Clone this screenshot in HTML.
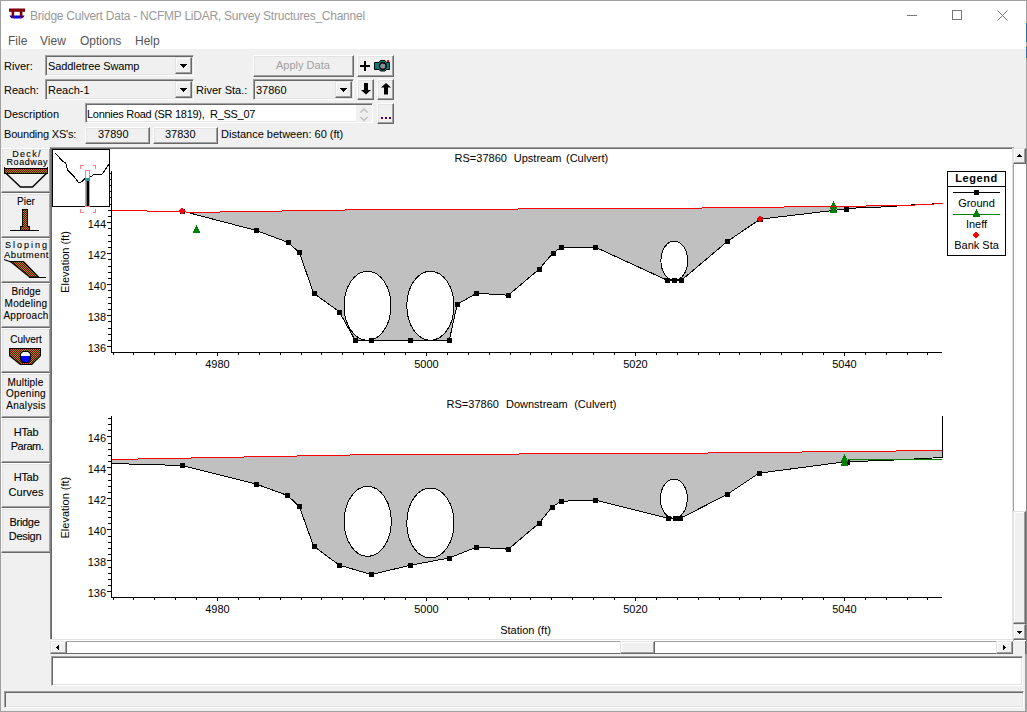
<!DOCTYPE html>
<html><head><meta charset="utf-8">
<style>
*{margin:0;padding:0;box-sizing:border-box}
html,body{width:1027px;height:712px;overflow:hidden;background:#f0f0f0;font-family:"Liberation Sans",sans-serif;font-size:11px;color:#000}
.a{position:absolute}
.t{position:absolute;white-space:pre;line-height:1}
.btn{position:absolute;background:#f0f0f0;border-top:1px solid #fff;border-left:1px solid #fff;border-right:1px solid #696969;border-bottom:1px solid #696969;box-shadow:inset -1px -1px 0 #a0a0a0, inset 1px 1px 0 #e3e3e3}
.sunk{position:absolute;border-top:1px solid #a0a0a0;border-left:1px solid #a0a0a0;border-right:1px solid #fff;border-bottom:1px solid #fff;box-shadow:inset 1px 1px 0 #696969, inset -1px -1px 0 #e3e3e3}
.sb{position:absolute;background:#f0f0f0;border-top:1px solid #e3e3e3;border-left:1px solid #e3e3e3;border-right:1px solid #696969;border-bottom:1px solid #696969;box-shadow:inset -1px -1px 0 #a0a0a0, inset 1px 1px 0 #fff}
.side{position:absolute;left:1px;width:50px;height:45px;background:#f0f0f0;border-top:1px solid #fff;border-left:1px solid #fff;border-right:1px solid #696969;border-bottom:1px solid #696969;box-shadow:inset -1px -1px 0 #a0a0a0, inset 1px 1px 0 #e3e3e3}
.st{position:absolute;left:0;width:50px;text-align:center;white-space:pre;line-height:1;font-size:10px}
</style></head><body>
<div class="a" style="left:0;top:0;width:1027px;height:712px;border:1px solid #a0a0a0"></div>
<!-- title bar -->
<div class="a" style="left:1px;top:1px;width:1025px;height:48px;background:#fff"></div>
<svg class="a" style="left:9px;top:8px" width="17" height="12" viewBox="0 0 17 12"><path d="M0.5 7.5H15.5Q14.5 10.5 12 10.5H4Q1.5 10.5 0.5 7.5Z" fill="#0000ff"/><rect x="0" y="0.5" width="16" height="3.3" fill="#800000"/><rect x="2.6" y="3" width="2.6" height="7" fill="#800000"/><rect x="10.8" y="3" width="2.6" height="7" fill="#800000"/></svg>
<div class="t" style="left:30px;top:10px;font-size:12px;letter-spacing:-0.24px;color:#999">Bridge Culvert Data - NCFMP LiDAR, Survey Structures_Channel</div>
<div class="a" style="left:907px;top:15px;width:10px;height:1px;background:#777"></div>
<div class="a" style="left:952px;top:10px;width:10px;height:10px;border:1px solid #777"></div>
<svg class="a" style="left:997px;top:10px" width="11" height="11"><path d="M0.5 0.5 L10.5 10.5 M10.5 0.5 L0.5 10.5" stroke="#777" stroke-width="1"/></svg>
<!-- menu -->
<div class="t" style="left:8px;top:35px;font-size:12px;color:#555">File</div>
<div class="t" style="left:40px;top:35px;font-size:12px;color:#555">View</div>
<div class="t" style="left:80px;top:35px;font-size:12px;color:#555">Options</div>
<div class="t" style="left:135px;top:35px;font-size:12px;color:#555">Help</div>

<!-- form rows -->
<div class="t" style="left:4px;top:61px">River:</div>
<div class="sunk" style="left:45px;top:55px;width:149px;height:21px;background:#f0f0f0"></div>
<div class="sb" style="left:175px;top:57px;width:17px;height:17px"></div>
<svg class="a" style="left:180px;top:64px" width="7" height="4"><rect x="0" y="0" width="7" height="1"/><rect x="1" y="1" width="5" height="1"/><rect x="2" y="2" width="3" height="1"/><rect x="3" y="3" width="1" height="1"/></svg>
<div class="t" style="left:48px;top:61px;letter-spacing:-0.1px">Saddletree Swamp</div>
<div class="t" style="left:4px;top:85px">Reach:</div>
<div class="sunk" style="left:45px;top:79px;width:149px;height:21px;background:#f0f0f0"></div>
<div class="sb" style="left:175px;top:81px;width:17px;height:17px"></div>
<svg class="a" style="left:180px;top:88px" width="7" height="4"><rect x="0" y="0" width="7" height="1"/><rect x="1" y="1" width="5" height="1"/><rect x="2" y="2" width="3" height="1"/><rect x="3" y="3" width="1" height="1"/></svg>
<div class="t" style="left:48px;top:85px">Reach-1</div>
<div class="t" style="left:196px;top:85px">River Sta.:</div>
<div class="sunk" style="left:253px;top:79px;width:101px;height:21px;background:#f0f0f0"></div>
<div class="sb" style="left:335px;top:81px;width:17px;height:17px"></div>
<svg class="a" style="left:340px;top:88px" width="7" height="4"><rect x="0" y="0" width="7" height="1"/><rect x="1" y="1" width="5" height="1"/><rect x="2" y="2" width="3" height="1"/><rect x="3" y="3" width="1" height="1"/></svg>
<div class="t" style="left:256px;top:85px">37860</div>
<div class="btn" style="left:253px;top:55px;width:101px;height:22px"></div>
<div class="t" style="left:276px;top:60px;color:#a0a0a0">Apply Data</div>
<div class="btn" style="left:357px;top:55px;width:37px;height:22px"></div>
<svg class="a" style="left:357px;top:55px" width="37" height="22"><path d="M3 11H13M8 6V16" stroke="#000" stroke-width="2"/><path d="M17.5 7.5H22L23.5 5.5H28L29.5 7.5H32.5V14.5H29.5L28 16H23.5L22 14.5H17.5Z" fill="#008080" stroke="#000" stroke-width="1"/><rect x="30" y="5" width="2" height="2" fill="#ff0000"/><circle cx="25.8" cy="11" r="4" fill="#000"/><circle cx="25.8" cy="11" r="2.6" fill="#909090"/></svg>
<div class="btn" style="left:357px;top:79px;width:17px;height:21px"></div>
<svg class="a" style="left:359px;top:82px" width="13" height="15"><path d="M3.5 1H7.5V8H10.5L5.5 12.5L0.5 8H3.5Z" fill="#000" transform="translate(1.5,0)"/></svg>
<div class="btn" style="left:377px;top:79px;width:17px;height:21px"></div>
<svg class="a" style="left:379px;top:82px" width="13" height="15"><path d="M3.5 12.5H7.5V5.5H10.5L5.5 1L0.5 5.5H3.5Z" fill="#000" transform="translate(1.5,0)"/></svg>
<div class="t" style="left:4px;top:109px">Description</div>
<div class="sunk" style="left:85px;top:103px;width:288px;height:20px;background:#fff"></div>
<div class="a" style="left:356px;top:105px;width:16px;height:17px;background:#f0f0f0"></div><svg class="a" style="left:358px;top:106px" width="13" height="16"><path d="M2.5 6.5L6 3L9.5 6.5M2.5 11L6 14.5L9.5 11" fill="none" stroke="#c0c0c0" stroke-width="1.5"/></svg>
<div class="t" style="left:87px;top:109px;letter-spacing:-0.29px">Lonnies Road (SR 1819),  R_SS_07</div>
<div class="btn" style="left:377px;top:103px;width:17px;height:21px"></div>
<svg class="a" style="left:380px;top:117px" width="12" height="3"><rect x="1" y="0" width="2" height="2" fill="#400080"/><rect x="5" y="0" width="2" height="2" fill="#400080"/><rect x="9" y="0" width="2" height="2" fill="#400080"/></svg>
<div class="t" style="left:4px;top:129px;letter-spacing:-0.2px">Bounding XS's:</div>
<div class="btn" style="left:85px;top:127px;width:65px;height:17px"></div>
<div class="t" style="left:98px;top:129px">37890</div>
<div class="btn" style="left:153px;top:127px;width:65px;height:17px"></div>
<div class="t" style="left:165px;top:129px">37830</div>
<div class="t" style="left:221px;top:129px">Distance between: 60 (ft)</div>

<!-- sidebar -->
<div class="side" style="top:148px"></div>
<div class="side" style="top:193px"></div>
<div class="side" style="top:238px"></div>
<div class="side" style="top:283px"></div>
<div class="side" style="top:328px"></div>
<div class="side" style="top:373px"></div>
<div class="side" style="top:418px"></div>
<div class="side" style="top:463px"></div>
<div class="side" style="top:508px"></div>
<svg class="a" style="left:0;top:140px" width="52" height="420" font-family="Liberation Sans" text-anchor="middle" stroke="#000" stroke-width="0.1">
<defs><pattern id="chk" x="0" y="0" width="2" height="2" patternUnits="userSpaceOnUse"><path d="M0 0H2V2H0Z" fill="#800000" stroke="none"/><path d="M0 0H1V1H0ZM1 1H2V2H1Z" fill="#909000" stroke="none"/></pattern></defs>
<g transform="translate(0,-140)">
<text x="27" y="157" font-size="9" letter-spacing="1.3">Deck/</text>
<text x="27.3" y="165" font-size="9" letter-spacing="0.6">Roadway</text>
<g shape-rendering="crispEdges" stroke="none"><rect x="4" y="168" width="44" height="6" fill="#000"/><rect x="5" y="169" width="42" height="4" fill="url(#chk)"/></g>
<path d="M6.2 173.5L20.5 187H32.5L46.3 173.5" fill="none" stroke="#000" stroke-width="1.4"/><rect x="4" y="167" width="1" height="2" fill="#000" stroke="none"/><rect x="47" y="167" width="1" height="2" fill="#000" stroke="none"/>
<text x="26" y="205" font-size="10">Pier</text>
<g shape-rendering="crispEdges" stroke="none"><rect x="22" y="209" width="6" height="18" fill="#000"/><rect x="20" y="226" width="10" height="5" fill="#000"/><rect x="10" y="230" width="29" height="1" fill="#000"/><rect x="23" y="210" width="4" height="17" fill="url(#chk)"/><rect x="21" y="227" width="8" height="3" fill="url(#chk)"/></g>
<text x="27" y="248" font-size="9" letter-spacing="2">Sloping</text>
<text x="26.5" y="257.5" font-size="9.5" letter-spacing="0.55">Abutment</text>
<path d="M10.5 261.5H23.5L38.5 277H29.5Z" fill="url(#chk)" stroke="#000" stroke-width="1.2"/>
<path d="M4 259.5L11 262" stroke="#000" stroke-width="1.2"/>
<path d="M29 277.5H46" stroke="#000" stroke-width="1"/>
<text x="26" y="295" font-size="10">Bridge</text>
<text x="26" y="307" font-size="10" letter-spacing="0.3">Modeling</text>
<text x="26" y="319" font-size="10" letter-spacing="0.3">Approach</text>
<text x="26" y="343" font-size="10">Culvert</text>
<g stroke="none"><path d="M9 348H41V356L32 365H20L9 356Z" fill="#000"/><path d="M10 349H40V355.2L31.2 364H20.8L10 355.2Z" fill="url(#chk)"/>
<path d="M22.5 351H28.5L31 353.5V360L28.5 363H22.5L20 360V353.5Z" fill="#000"/><path d="M23 352H28L30 354V356H21V354Z" fill="#f0f0f0"/><path d="M21 356H30V359.6L28 362H23L21 359.6Z" fill="#0000ff"/></g>
<text x="25.5" y="386" font-size="10" letter-spacing="0.2">Multiple</text>
<text x="26" y="397" font-size="10" letter-spacing="0.3">Opening</text>
<text x="26" y="408.5" font-size="10" letter-spacing="0.3">Analysis</text>
<text x="26" y="435.5" font-size="11" letter-spacing="-0.3">HTab</text>
<text x="27" y="450" font-size="11" letter-spacing="-0.5">Param.</text>
<text x="26" y="481" font-size="11" letter-spacing="-0.3">HTab</text>
<text x="26" y="496" font-size="11" letter-spacing="0">Curves</text>
<text x="24.5" y="525.5" font-size="11" letter-spacing="-0.3">Bridge</text>
<text x="25" y="539.5" font-size="11" letter-spacing="-0.3">Design</text>
</g></svg>

<!-- chart panel -->
<div class="a" style="left:50px;top:147px;width:964px;height:492px;background:#fff;border-top:1px solid #a0a0a0;border-left:1px solid #808080;box-shadow:inset 1px 1px 0 #696969"></div>
<!-- vertical scrollbar -->
<div class="a" style="left:1012px;top:148px;width:1px;height:491px;background:#e3e3e3"></div>
<div class="a" style="left:1013px;top:148px;width:13px;height:493px;background:#fff;border-left:1px solid #a0a0a0"></div><div class="a" style="left:1026px;top:148px;width:1px;height:506px;background:#888"></div>
<div class="sb" style="left:1013px;top:148px;width:13px;height:16px"></div>
<svg class="a" style="left:1017px;top:154px" width="5" height="3"><rect x="2" y="0" width="1" height="1"/><rect x="1" y="1" width="3" height="1"/><rect x="0" y="2" width="5" height="1"/></svg>
<div class="sb" style="left:1013px;top:511px;width:13px;height:113px"></div>
<div class="sb" style="left:1013px;top:624px;width:13px;height:16px"></div>
<svg class="a" style="left:1017px;top:631px" width="5" height="3"><rect x="0" y="0" width="5" height="1"/><rect x="1" y="1" width="3" height="1"/><rect x="2" y="2" width="1" height="1"/></svg>
<!-- horizontal scrollbar -->
<div class="a" style="left:50px;top:639px;width:963px;height:1px;background:#e3e3e3"></div>
<div class="a" style="left:50px;top:640px;width:963px;height:1px;background:#fff"></div>
<div class="a" style="left:50px;top:641px;width:963px;height:13px;background:#fff;border-top:1px solid #a0a0a0;border-bottom:1px solid #696969"></div>
<div class="sb" style="left:50px;top:641px;width:17px;height:13px"></div>
<svg class="a" style="left:56px;top:645px" width="3" height="5"><rect x="0" y="2" width="1" height="1"/><rect x="1" y="1" width="1" height="3"/><rect x="2" y="0" width="1" height="5"/></svg>
<div class="sb" style="left:620px;top:641px;width:35px;height:13px"></div>
<div class="sb" style="left:996px;top:641px;width:17px;height:13px"></div>
<svg class="a" style="left:1003px;top:645px" width="3" height="5"><rect x="0" y="0" width="1" height="5"/><rect x="1" y="1" width="1" height="3"/><rect x="2" y="2" width="1" height="1"/></svg>
<div class="a" style="left:1013px;top:641px;width:13px;height:13px;background:#f0f0f0;border-right:1px solid #696969"></div>
<div class="a" style="left:1025px;top:654px;width:1px;height:57px;background:#a0a0a0"></div>
<div class="a" style="left:1026px;top:23px;width:1px;height:19px;background:#2a6ab0"></div>
<div class="a" style="left:1026px;top:47px;width:1px;height:11px;background:#2a6ab0"></div>
<!-- text box -->
<div class="sunk" style="left:51px;top:656px;width:972px;height:30px;background:#fff"></div>
<!-- status bar -->
<div class="a" style="left:4px;top:691px;width:1020px;height:17px;border-top:1px solid #a0a0a0;border-left:1px solid #a0a0a0;border-right:1px solid #fff;border-bottom:1px solid #fff;box-shadow:inset 1px 1px 0 #696969, inset -1px -1px 0 #e3e3e3"></div>

<svg class="a" style="left:0;top:0" width="1027" height="712" shape-rendering="crispEdges">
<polygon points="182,211 256.4,230.5 287.6,242.2 299.3,252.3 313.5,293.1 339.2,311.7 355.2,340.3 371.2,340.3 410.4,340.3 449.3,340.3 457.2,304.4 476.5,293.2 508.3,295.2 539.1,269.2 552.6,253.3 561.4,247.2 595.4,247.2 667.3,280.3 674.4,280.3 681.4,280.3 727.4,241.4 760,219.2 846.4,208.9 856,208 894,206.5 900,205.5 942.5,203.5 942.5,203 934,203 934,204 915,204 915,205 866,205 866,206 784,206 784,207 702,207 702,208 518,208 518,209 345,209 345,210 282,210 282,211 220,211 220,212 186,212 186,211 182,211 182,210 182,210" fill="#c0c0c0" stroke="none"/>
<ellipse cx="367.5" cy="305.8" rx="23.5" ry="34.5" fill="#fff" stroke="#000" stroke-width="1"/>
<ellipse cx="430.4" cy="305.8" rx="23.6" ry="34.5" fill="#fff" stroke="#000" stroke-width="1"/>
<ellipse cx="674.3" cy="260.7" rx="13.4" ry="19.6" fill="#fff" stroke="#000" stroke-width="1"/>
<polyline points="182,211 256.4,230.5 287.6,242.2 299.3,252.3 313.5,293.1 339.2,311.7 355.2,340.3 371.2,340.3 410.4,340.3 449.3,340.3 457.2,304.4 476.5,293.2 508.3,295.2 539.1,269.2 552.6,253.3 561.4,247.2 595.4,247.2 667.3,280.3 674.4,280.3 681.4,280.3 727.4,241.4 760,219.2 846.4,208.9 856,208 894,206.5 900,205.5 942.5,203.5" fill="none" stroke="#000" stroke-width="1"/>
<rect x="111" y="210" width="36" height="1" fill="#ff0000"/>
<rect x="147" y="211" width="39" height="1" fill="#ff0000"/>
<rect x="186" y="212" width="34" height="1" fill="#ff0000"/>
<rect x="220" y="211" width="62" height="1" fill="#ff0000"/>
<rect x="282" y="210" width="63" height="1" fill="#ff0000"/>
<rect x="345" y="209" width="173" height="1" fill="#ff0000"/>
<rect x="518" y="208" width="184" height="1" fill="#ff0000"/>
<rect x="702" y="207" width="82" height="1" fill="#ff0000"/>
<rect x="784" y="206" width="82" height="1" fill="#ff0000"/>
<rect x="866" y="205" width="49" height="1" fill="#ff0000"/>
<rect x="915" y="204" width="19" height="1" fill="#ff0000"/>
<rect x="934" y="203" width="9" height="1" fill="#ff0000"/>
<rect x="180" y="209" width="5" height="5" fill="#000"/>
<rect x="254" y="228" width="5" height="5" fill="#000"/>
<rect x="286" y="240" width="5" height="5" fill="#000"/>
<rect x="297" y="250" width="5" height="5" fill="#000"/>
<rect x="312" y="291" width="5" height="5" fill="#000"/>
<rect x="337" y="310" width="5" height="5" fill="#000"/>
<rect x="353" y="338" width="5" height="5" fill="#000"/>
<rect x="369" y="338" width="5" height="5" fill="#000"/>
<rect x="408" y="338" width="5" height="5" fill="#000"/>
<rect x="447" y="338" width="5" height="5" fill="#000"/>
<rect x="455" y="302" width="5" height="5" fill="#000"/>
<rect x="474" y="291" width="5" height="5" fill="#000"/>
<rect x="506" y="293" width="5" height="5" fill="#000"/>
<rect x="537" y="267" width="5" height="5" fill="#000"/>
<rect x="551" y="251" width="5" height="5" fill="#000"/>
<rect x="559" y="245" width="5" height="5" fill="#000"/>
<rect x="593" y="245" width="5" height="5" fill="#000"/>
<rect x="665" y="278" width="5" height="5" fill="#000"/>
<rect x="672" y="278" width="5" height="5" fill="#000"/>
<rect x="679" y="278" width="5" height="5" fill="#000"/>
<rect x="725" y="239" width="5" height="5" fill="#000"/>
<rect x="758" y="217" width="5" height="5" fill="#000"/>
<rect x="844" y="207" width="5" height="5" fill="#000"/>
<rect x="111" y="171" width="1" height="182" fill="#000"/>
<rect x="111" y="352" width="831" height="1" fill="#000"/>
<rect x="107" y="346" width="4" height="1" fill="#000"/>
<rect x="108" y="340" width="3" height="1" fill="#000"/>
<rect x="108" y="334" width="3" height="1" fill="#000"/>
<rect x="108" y="328" width="3" height="1" fill="#000"/>
<rect x="108" y="321" width="3" height="1" fill="#000"/>
<rect x="107" y="315" width="4" height="1" fill="#000"/>
<rect x="108" y="309" width="3" height="1" fill="#000"/>
<rect x="108" y="303" width="3" height="1" fill="#000"/>
<rect x="108" y="297" width="3" height="1" fill="#000"/>
<rect x="108" y="290" width="3" height="1" fill="#000"/>
<rect x="107" y="284" width="4" height="1" fill="#000"/>
<rect x="108" y="278" width="3" height="1" fill="#000"/>
<rect x="108" y="272" width="3" height="1" fill="#000"/>
<rect x="108" y="266" width="3" height="1" fill="#000"/>
<rect x="108" y="259" width="3" height="1" fill="#000"/>
<rect x="107" y="253" width="4" height="1" fill="#000"/>
<rect x="108" y="247" width="3" height="1" fill="#000"/>
<rect x="108" y="241" width="3" height="1" fill="#000"/>
<rect x="108" y="235" width="3" height="1" fill="#000"/>
<rect x="108" y="228" width="3" height="1" fill="#000"/>
<rect x="107" y="222" width="4" height="1" fill="#000"/>
<rect x="108" y="216" width="3" height="1" fill="#000"/>
<rect x="108" y="210" width="3" height="1" fill="#000"/>
<rect x="108" y="204" width="3" height="1" fill="#000"/>
<rect x="108" y="197" width="3" height="1" fill="#000"/>
<rect x="107" y="191" width="4" height="1" fill="#000"/>
<rect x="108" y="185" width="3" height="1" fill="#000"/>
<rect x="108" y="179" width="3" height="1" fill="#000"/>
<rect x="108" y="173" width="3" height="1" fill="#000"/>
<rect x="113" y="352" width="1" height="3" fill="#000"/>
<rect x="133" y="352" width="1" height="3" fill="#000"/>
<rect x="154" y="352" width="1" height="3" fill="#000"/>
<rect x="175" y="352" width="1" height="3" fill="#000"/>
<rect x="196" y="352" width="1" height="3" fill="#000"/>
<rect x="217" y="352" width="1" height="4" fill="#000"/>
<rect x="238" y="352" width="1" height="3" fill="#000"/>
<rect x="259" y="352" width="1" height="3" fill="#000"/>
<rect x="280" y="352" width="1" height="3" fill="#000"/>
<rect x="301" y="352" width="1" height="3" fill="#000"/>
<rect x="321" y="352" width="1" height="3" fill="#000"/>
<rect x="342" y="352" width="1" height="3" fill="#000"/>
<rect x="363" y="352" width="1" height="3" fill="#000"/>
<rect x="384" y="352" width="1" height="3" fill="#000"/>
<rect x="405" y="352" width="1" height="3" fill="#000"/>
<rect x="426" y="352" width="1" height="4" fill="#000"/>
<rect x="447" y="352" width="1" height="3" fill="#000"/>
<rect x="468" y="352" width="1" height="3" fill="#000"/>
<rect x="489" y="352" width="1" height="3" fill="#000"/>
<rect x="510" y="352" width="1" height="3" fill="#000"/>
<rect x="530" y="352" width="1" height="3" fill="#000"/>
<rect x="551" y="352" width="1" height="3" fill="#000"/>
<rect x="572" y="352" width="1" height="3" fill="#000"/>
<rect x="593" y="352" width="1" height="3" fill="#000"/>
<rect x="614" y="352" width="1" height="3" fill="#000"/>
<rect x="635" y="352" width="1" height="4" fill="#000"/>
<rect x="656" y="352" width="1" height="3" fill="#000"/>
<rect x="677" y="352" width="1" height="3" fill="#000"/>
<rect x="698" y="352" width="1" height="3" fill="#000"/>
<rect x="719" y="352" width="1" height="3" fill="#000"/>
<rect x="739" y="352" width="1" height="3" fill="#000"/>
<rect x="760" y="352" width="1" height="3" fill="#000"/>
<rect x="781" y="352" width="1" height="3" fill="#000"/>
<rect x="802" y="352" width="1" height="3" fill="#000"/>
<rect x="823" y="352" width="1" height="3" fill="#000"/>
<rect x="844" y="352" width="1" height="4" fill="#000"/>
<rect x="865" y="352" width="1" height="3" fill="#000"/>
<rect x="886" y="352" width="1" height="3" fill="#000"/>
<rect x="907" y="352" width="1" height="3" fill="#000"/>
<rect x="927" y="352" width="1" height="3" fill="#000"/>
<polygon points="111,463.5 182.4,465.5 256.5,484.2 287.3,495.4 299.3,506.4 313.5,546.1 339.4,565.2 371.4,574.5 410.5,565.2 449.2,558 476.4,547.1 508.4,549.2 539.2,523.1 552.3,506.6 561.4,501.2 595.4,500.2 668.3,518.3 674.6,518.3 680.5,518.3 727.3,494.3 759,473.2 847,461.5 893.5,460.4 894.5,459.4 913.5,459.2 914.5,458.4 933,458 934,457.5 942.5,457.5 942.5,450 896,450 896,451 802,451 802,452 708,452 708,453 519,453 519,454 350,454 350,455 297,455 297,456 244,456 244,457 191,457 191,458 138,458 138,459 111,459" fill="#c0c0c0" stroke="none"/>
<ellipse cx="367.7" cy="521.4" rx="23.6" ry="35" fill="#fff" stroke="#000" stroke-width="1"/>
<ellipse cx="430.4" cy="523" rx="23.6" ry="35" fill="#fff" stroke="#000" stroke-width="1"/>
<ellipse cx="673.9" cy="498.7" rx="13.5" ry="19.6" fill="#fff" stroke="#000" stroke-width="1"/>
<polyline points="111,463.5 182.4,465.5 256.5,484.2 287.3,495.4 299.3,506.4 313.5,546.1 339.4,565.2 371.4,574.5 410.5,565.2 449.2,558 476.4,547.1 508.4,549.2 539.2,523.1 552.3,506.6 561.4,501.2 595.4,500.2 668.3,518.3 674.6,518.3 680.5,518.3 727.3,494.3 759,473.2 847,461.5 893.5,460.4 894.5,459.4 913.5,459.2 914.5,458.4 933,458 934,457.5 942.5,457.5" fill="none" stroke="#000" stroke-width="1"/>
<rect x="111" y="459" width="27" height="1" fill="#ff0000"/>
<rect x="138" y="458" width="53" height="1" fill="#ff0000"/>
<rect x="191" y="457" width="53" height="1" fill="#ff0000"/>
<rect x="244" y="456" width="53" height="1" fill="#ff0000"/>
<rect x="297" y="455" width="53" height="1" fill="#ff0000"/>
<rect x="350" y="454" width="169" height="1" fill="#ff0000"/>
<rect x="519" y="453" width="189" height="1" fill="#ff0000"/>
<rect x="708" y="452" width="94" height="1" fill="#ff0000"/>
<rect x="802" y="451" width="94" height="1" fill="#ff0000"/>
<rect x="896" y="450" width="47" height="1" fill="#ff0000"/>
<rect x="180" y="463" width="5" height="5" fill="#000"/>
<rect x="254" y="482" width="5" height="5" fill="#000"/>
<rect x="285" y="493" width="5" height="5" fill="#000"/>
<rect x="297" y="504" width="5" height="5" fill="#000"/>
<rect x="312" y="544" width="5" height="5" fill="#000"/>
<rect x="337" y="563" width="5" height="5" fill="#000"/>
<rect x="369" y="572" width="5" height="5" fill="#000"/>
<rect x="408" y="563" width="5" height="5" fill="#000"/>
<rect x="447" y="556" width="5" height="5" fill="#000"/>
<rect x="474" y="545" width="5" height="5" fill="#000"/>
<rect x="506" y="547" width="5" height="5" fill="#000"/>
<rect x="537" y="521" width="5" height="5" fill="#000"/>
<rect x="550" y="505" width="5" height="5" fill="#000"/>
<rect x="559" y="499" width="5" height="5" fill="#000"/>
<rect x="593" y="498" width="5" height="5" fill="#000"/>
<rect x="666" y="516" width="5" height="5" fill="#000"/>
<rect x="673" y="516" width="5" height="5" fill="#000"/>
<rect x="678" y="516" width="5" height="5" fill="#000"/>
<rect x="725" y="492" width="5" height="5" fill="#000"/>
<rect x="757" y="471" width="5" height="5" fill="#000"/>
<rect x="845" y="460" width="5" height="5" fill="#000"/>
<rect x="111" y="416" width="1" height="182" fill="#000"/>
<rect x="111" y="597" width="831" height="1" fill="#000"/>
<rect x="107" y="591" width="4" height="1" fill="#000"/>
<rect x="108" y="585" width="3" height="1" fill="#000"/>
<rect x="108" y="579" width="3" height="1" fill="#000"/>
<rect x="108" y="573" width="3" height="1" fill="#000"/>
<rect x="108" y="567" width="3" height="1" fill="#000"/>
<rect x="107" y="560" width="4" height="1" fill="#000"/>
<rect x="108" y="554" width="3" height="1" fill="#000"/>
<rect x="108" y="548" width="3" height="1" fill="#000"/>
<rect x="108" y="542" width="3" height="1" fill="#000"/>
<rect x="108" y="536" width="3" height="1" fill="#000"/>
<rect x="107" y="529" width="4" height="1" fill="#000"/>
<rect x="108" y="523" width="3" height="1" fill="#000"/>
<rect x="108" y="517" width="3" height="1" fill="#000"/>
<rect x="108" y="511" width="3" height="1" fill="#000"/>
<rect x="108" y="505" width="3" height="1" fill="#000"/>
<rect x="107" y="498" width="4" height="1" fill="#000"/>
<rect x="108" y="492" width="3" height="1" fill="#000"/>
<rect x="108" y="486" width="3" height="1" fill="#000"/>
<rect x="108" y="480" width="3" height="1" fill="#000"/>
<rect x="108" y="474" width="3" height="1" fill="#000"/>
<rect x="107" y="467" width="4" height="1" fill="#000"/>
<rect x="108" y="461" width="3" height="1" fill="#000"/>
<rect x="108" y="455" width="3" height="1" fill="#000"/>
<rect x="108" y="449" width="3" height="1" fill="#000"/>
<rect x="108" y="443" width="3" height="1" fill="#000"/>
<rect x="107" y="436" width="4" height="1" fill="#000"/>
<rect x="108" y="430" width="3" height="1" fill="#000"/>
<rect x="108" y="424" width="3" height="1" fill="#000"/>
<rect x="108" y="418" width="3" height="1" fill="#000"/>
<rect x="113" y="597" width="1" height="3" fill="#000"/>
<rect x="133" y="597" width="1" height="3" fill="#000"/>
<rect x="154" y="597" width="1" height="3" fill="#000"/>
<rect x="175" y="597" width="1" height="3" fill="#000"/>
<rect x="196" y="597" width="1" height="3" fill="#000"/>
<rect x="217" y="597" width="1" height="4" fill="#000"/>
<rect x="238" y="597" width="1" height="3" fill="#000"/>
<rect x="259" y="597" width="1" height="3" fill="#000"/>
<rect x="280" y="597" width="1" height="3" fill="#000"/>
<rect x="301" y="597" width="1" height="3" fill="#000"/>
<rect x="321" y="597" width="1" height="3" fill="#000"/>
<rect x="342" y="597" width="1" height="3" fill="#000"/>
<rect x="363" y="597" width="1" height="3" fill="#000"/>
<rect x="384" y="597" width="1" height="3" fill="#000"/>
<rect x="405" y="597" width="1" height="3" fill="#000"/>
<rect x="426" y="597" width="1" height="4" fill="#000"/>
<rect x="447" y="597" width="1" height="3" fill="#000"/>
<rect x="468" y="597" width="1" height="3" fill="#000"/>
<rect x="489" y="597" width="1" height="3" fill="#000"/>
<rect x="510" y="597" width="1" height="3" fill="#000"/>
<rect x="530" y="597" width="1" height="3" fill="#000"/>
<rect x="551" y="597" width="1" height="3" fill="#000"/>
<rect x="572" y="597" width="1" height="3" fill="#000"/>
<rect x="593" y="597" width="1" height="3" fill="#000"/>
<rect x="614" y="597" width="1" height="3" fill="#000"/>
<rect x="635" y="597" width="1" height="4" fill="#000"/>
<rect x="656" y="597" width="1" height="3" fill="#000"/>
<rect x="677" y="597" width="1" height="3" fill="#000"/>
<rect x="698" y="597" width="1" height="3" fill="#000"/>
<rect x="719" y="597" width="1" height="3" fill="#000"/>
<rect x="739" y="597" width="1" height="3" fill="#000"/>
<rect x="760" y="597" width="1" height="3" fill="#000"/>
<rect x="781" y="597" width="1" height="3" fill="#000"/>
<rect x="802" y="597" width="1" height="3" fill="#000"/>
<rect x="823" y="597" width="1" height="3" fill="#000"/>
<rect x="844" y="597" width="1" height="4" fill="#000"/>
<rect x="865" y="597" width="1" height="3" fill="#000"/>
<rect x="886" y="597" width="1" height="3" fill="#000"/>
<rect x="907" y="597" width="1" height="3" fill="#000"/>
<rect x="927" y="597" width="1" height="3" fill="#000"/>
</svg>
<svg class="a" style="left:0;top:0" width="1027" height="712" font-family="Liberation Sans" font-size="11">
<text x="106" y="351.7" text-anchor="end">136</text>
<text x="106" y="320.7" text-anchor="end">138</text>
<text x="106" y="289.7" text-anchor="end">140</text>
<text x="106" y="258.7" text-anchor="end">142</text>
<text x="106" y="227.7" text-anchor="end">144</text>
<text x="217.5" y="368" text-anchor="middle">4980</text>
<text x="426.5" y="368" text-anchor="middle">5000</text>
<text x="635.4" y="368" text-anchor="middle">5020</text>
<text x="844.4" y="368" text-anchor="middle">5040</text>
<text x="106" y="596.7" text-anchor="end">136</text>
<text x="106" y="565.7" text-anchor="end">138</text>
<text x="106" y="534.7" text-anchor="end">140</text>
<text x="106" y="503.7" text-anchor="end">142</text>
<text x="106" y="472.7" text-anchor="end">144</text>
<text x="106" y="441.7" text-anchor="end">146</text>
<text x="217.5" y="613" text-anchor="middle">4980</text>
<text x="426.5" y="613" text-anchor="middle">5000</text>
<text x="635.4" y="613" text-anchor="middle">5020</text>
<text x="844.4" y="613" text-anchor="middle">5040</text>
<text x="454.6" y="162">RS=37860</text>
<text x="513.8" y="162">Upstream</text>
<text x="566" y="162">(Culvert)</text>
<text x="446.6" y="408.3">RS=37860</text>
<text x="506" y="408.3">Downstream</text>
<text x="574.2" y="408.3">(Culvert)</text>
<text x="550.9" y="633.6" text-anchor="end">Station (ft)</text>
<text transform="translate(68.5,262) rotate(-90)" text-anchor="middle">Elevation (ft)</text>
<text transform="translate(68.5,507.6) rotate(-90)" text-anchor="middle">Elevation (ft)</text>
<rect x="947.5" y="171.5" width="58" height="84" fill="#fff" stroke="#000" stroke-width="1" shape-rendering="crispEdges"/>
<rect x="947.5" y="185.5" width="58" height="1" fill="#000" shape-rendering="crispEdges"/>
<text x="976.5" y="182" text-anchor="middle" font-weight="bold" letter-spacing="0.6">Legend</text>
<rect x="953" y="192" width="47" height="1" fill="#000" shape-rendering="crispEdges"/>
<rect x="974" y="190" width="5" height="5" fill="#000" shape-rendering="crispEdges"/>
<text x="976.5" y="207" text-anchor="middle">Ground</text>
<rect x="953" y="214" width="47" height="1" fill="#008000" shape-rendering="crispEdges"/>
<rect x="976" y="209" width="1" height="2" fill="#008000" shape-rendering="crispEdges"/><rect x="975" y="211" width="3" height="2" fill="#008000" shape-rendering="crispEdges"/><rect x="974" y="213" width="5" height="2" fill="#008000" shape-rendering="crispEdges"/><rect x="973" y="215" width="7" height="2" fill="#008000" shape-rendering="crispEdges"/>
<text x="976.5" y="228" text-anchor="middle">Ineff</text>
<rect x="975" y="232" width="2" height="1" fill="#ff0000" shape-rendering="crispEdges"/><rect x="974" y="233" width="4" height="1" fill="#ff0000" shape-rendering="crispEdges"/><rect x="973" y="234" width="6" height="1" fill="#ff0000" shape-rendering="crispEdges"/><rect x="973" y="235" width="6" height="1" fill="#ff0000" shape-rendering="crispEdges"/><rect x="974" y="236" width="4" height="1" fill="#ff0000" shape-rendering="crispEdges"/><rect x="975" y="237" width="2" height="1" fill="#ff0000" shape-rendering="crispEdges"/>
<text x="976.5" y="248.5" text-anchor="middle">Bank Sta</text>
<rect x="181" y="208" width="2" height="1" fill="#ff0000" shape-rendering="crispEdges"/><rect x="180" y="209" width="4" height="1" fill="#ff0000" shape-rendering="crispEdges"/><rect x="179" y="210" width="6" height="1" fill="#ff0000" shape-rendering="crispEdges"/><rect x="179" y="211" width="6" height="1" fill="#ff0000" shape-rendering="crispEdges"/><rect x="180" y="212" width="4" height="1" fill="#ff0000" shape-rendering="crispEdges"/><rect x="181" y="213" width="2" height="1" fill="#ff0000" shape-rendering="crispEdges"/>
<rect x="759" y="216" width="2" height="1" fill="#ff0000" shape-rendering="crispEdges"/><rect x="758" y="217" width="4" height="1" fill="#ff0000" shape-rendering="crispEdges"/><rect x="757" y="218" width="6" height="1" fill="#ff0000" shape-rendering="crispEdges"/><rect x="757" y="219" width="6" height="1" fill="#ff0000" shape-rendering="crispEdges"/><rect x="758" y="220" width="4" height="1" fill="#ff0000" shape-rendering="crispEdges"/><rect x="759" y="221" width="2" height="1" fill="#ff0000" shape-rendering="crispEdges"/>
<rect x="196" y="225" width="1" height="2" fill="#008000" shape-rendering="crispEdges"/><rect x="195" y="227" width="3" height="2" fill="#008000" shape-rendering="crispEdges"/><rect x="194" y="229" width="5" height="2" fill="#008000" shape-rendering="crispEdges"/><rect x="193" y="231" width="7" height="2" fill="#008000" shape-rendering="crispEdges"/>
<rect x="833" y="201" width="1" height="2" fill="#008000" shape-rendering="crispEdges"/><rect x="832" y="203" width="3" height="2" fill="#008000" shape-rendering="crispEdges"/><rect x="831" y="205" width="5" height="2" fill="#008000" shape-rendering="crispEdges"/><rect x="830" y="207" width="7" height="2" fill="#008000" shape-rendering="crispEdges"/><rect x="833" y="205" width="1" height="2" fill="#008000" shape-rendering="crispEdges"/><rect x="832" y="207" width="3" height="2" fill="#008000" shape-rendering="crispEdges"/><rect x="831" y="209" width="5" height="2" fill="#008000" shape-rendering="crispEdges"/><rect x="830" y="211" width="7" height="2" fill="#008000" shape-rendering="crispEdges"/><rect x="829" y="206" width="9" height="1" fill="#ff0000" shape-rendering="crispEdges"/>
<rect x="844" y="454" width="1" height="2" fill="#008000" shape-rendering="crispEdges"/><rect x="843" y="456" width="3" height="2" fill="#008000" shape-rendering="crispEdges"/><rect x="842" y="458" width="5" height="2" fill="#008000" shape-rendering="crispEdges"/><rect x="841" y="460" width="7" height="2" fill="#008000" shape-rendering="crispEdges"/><rect x="844" y="458" width="1" height="2" fill="#008000" shape-rendering="crispEdges"/><rect x="843" y="460" width="3" height="2" fill="#008000" shape-rendering="crispEdges"/><rect x="842" y="462" width="5" height="2" fill="#008000" shape-rendering="crispEdges"/><rect x="841" y="464" width="7" height="2" fill="#008000" shape-rendering="crispEdges"/>
<rect x="848" y="459" width="94" height="1" fill="#008000" shape-rendering="crispEdges"/>
<rect x="942" y="416" width="1" height="42" fill="#000" shape-rendering="crispEdges"/>
<rect x="52.5" y="149.5" width="57" height="57" fill="#fff" stroke="#000" stroke-width="1" shape-rendering="crispEdges"/>
<polyline points="55.4,153.4 62.7,161.2 65.7,163.2 67.7,170.1 74.5,177 78.5,182.4 81.4,181.9 84.9,178.4 87,180 90.3,177 94.2,174.3 102,174.3 109,164.2" fill="none" stroke="#000" stroke-width="1" shape-rendering="crispEdges"/>
<rect x="85.5" y="170.5" width="4" height="36" fill="none" stroke="#ff8080" stroke-width="1" shape-rendering="crispEdges"/>
<rect x="86.5" y="180" width="2.5" height="26" fill="#000"/>
<rect x="85" y="178" width="5" height="3" fill="#2a9a9a"/>
<path d="M80.5 169V165.5H84 M92.5 165.5H95.5V169 M80.5 209V212.5H84 M92.5 212.5H95.5V209" fill="none" stroke="#ff8080" stroke-width="1" shape-rendering="crispEdges"/>
</svg>
</body></html>
